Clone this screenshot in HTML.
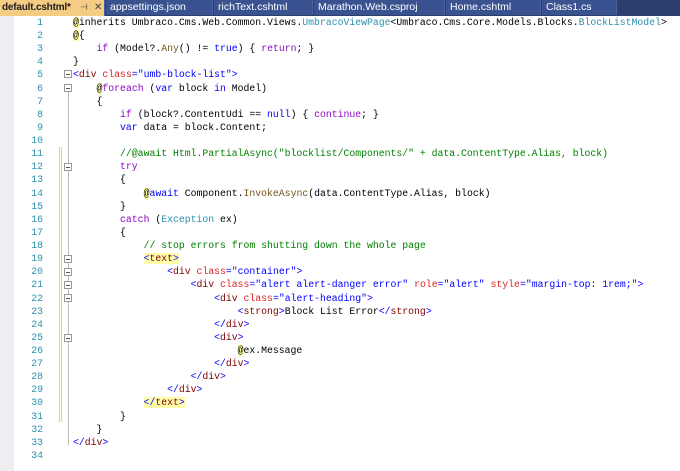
<!DOCTYPE html>
<html><head><meta charset="utf-8"><style>
*{margin:0;padding:0;box-sizing:border-box}
body{width:680px;height:471px;overflow:hidden;background:#fff;font-family:"Liberation Mono",monospace;position:relative}
#tabs{position:absolute;left:0;top:0;width:680px;height:16px;background:#2d3f6c}
.tab{position:absolute;top:0;height:15px;background:#3a5390;color:#fff;font:10.5px "Liberation Sans",sans-serif;line-height:15px;padding-left:4px;border-right:1px solid #4a63a0;white-space:nowrap;overflow:hidden}
.tab.act{background:#f5cc84;color:#1e1e1e;font-weight:bold;height:16px;padding-left:2px;font-size:10px;letter-spacing:-0.2px}
.ic{position:absolute;top:0;font-weight:normal;color:#444}
#gut{position:absolute;left:0;top:16px;width:14px;height:455px;background:#eeeef2}
.ln{position:absolute;left:14px;width:29px;text-align:right;color:#2b91af;font-size:9.8px;height:13.12px;line-height:13.12px}
.cl{position:absolute;left:73px;font-size:9.8px;white-space:pre;height:13.12px;line-height:13.12px;color:#000}
.chg{position:absolute;left:59px;width:3px;border:1px solid #e5d48a;border-top:none;border-bottom:none;background:#fffbe0}
.fold{position:absolute;left:64px;width:8px;height:8px;border:1px solid #999;background:#fff}
.fold::after{content:"";position:absolute;left:1px;top:3px;width:4px;height:1px;background:#555}
.vl{position:absolute;left:68px;width:1px;background:#bbb}
.k{color:#0000ff}.c{color:#8f08c4}.t{color:#2b91af}.m{color:#74531f}.g{color:#008000}
.tg{color:#800000}.a{color:#e21f1f}.b{color:#0000ff}.s{color:#a31515}
.r{background:#ffffaa}
</style></head><body>
<div id="tabs">
<div class="tab act" style="left:0;width:105px">default.cshtml*<span class="ic" style="left:80px;font-size:9px">⊣</span><span class="ic" style="left:94px">✕</span></div>
<div class="tab" style="left:106px;width:107px">appsettings.json</div>
<div class="tab" style="left:214px;width:99px">richText.cshtml</div>
<div class="tab" style="left:314px;width:131px">Marathon.Web.csproj</div>
<div class="tab" style="left:446px;width:95px">Home.cshtml</div>
<div class="tab" style="left:542px;width:75px">Class1.cs</div>
</div>
<div id="gut"></div>
<div class="chg" style="top:147px;height:275px"></div>
<div class="vl" style="top:85px;height:360px"></div>
<div class="fold" style="top:70px"></div>
<div class="fold" style="top:84px"></div>
<div class="fold" style="top:163px"></div>
<div class="fold" style="top:255px"></div>
<div class="fold" style="top:268px"></div>
<div class="fold" style="top:281px"></div>
<div class="fold" style="top:294px"></div>
<div class="fold" style="top:334px"></div>
<script>
var L=[
'<span class="r">@</span>inherits Umbraco.Cms.Web.Common.Views.<span class="t">UmbracoViewPage</span>&lt;Umbraco.Cms.Core.Models.Blocks.<span class="t">BlockListModel</span>&gt;',
'<span class="r">@</span>{',
'    <span class="c">if</span> (Model?.<span class="m">Any</span>() != <span class="k">true</span>) { <span class="c">return</span>; }',
'}',
'<span class="b">&lt;</span><span class="tg">div</span> <span class="a">class</span><span class="b">="umb-block-list"&gt;</span>',
'    <span class="r">@</span><span class="c">foreach</span> (<span class="k">var</span> block <span class="k">in</span> Model)',
'    {',
'        <span class="c">if</span> (block?.ContentUdi == <span class="k">null</span>) { <span class="c">continue</span>; }',
'        <span class="k">var</span> data = block.Content;',
'',
'        <span class="g">//@await Html.PartialAsync("blocklist/Components/" + data.ContentType.Alias, block)</span>',
'        <span class="c">try</span>',
'        {',
'            <span class="r">@</span><span class="k">await</span> Component.<span class="m">InvokeAsync</span>(data.ContentType.Alias, block)',
'        }',
'        <span class="c">catch</span> (<span class="t">Exception</span> ex)',
'        {',
'            <span class="g">// stop errors from shutting down the whole page</span>',
'            <span class="r"><span class="b">&lt;</span><span class="tg">text</span><span class="b">&gt;</span></span>',
'                <span class="b">&lt;</span><span class="tg">div</span> <span class="a">class</span><span class="b">="container"&gt;</span>',
'                    <span class="b">&lt;</span><span class="tg">div</span> <span class="a">class</span><span class="b">="alert alert-danger error"</span> <span class="a">role</span><span class="b">="alert"</span> <span class="a">style</span><span class="b">="margin-top: 1rem;"&gt;</span>',
'                        <span class="b">&lt;</span><span class="tg">div</span> <span class="a">class</span><span class="b">="alert-heading"&gt;</span>',
'                            <span class="b">&lt;</span><span class="tg">strong</span><span class="b">&gt;</span>Block List Error<span class="b">&lt;/</span><span class="tg">strong</span><span class="b">&gt;</span>',
'                        <span class="b">&lt;/</span><span class="tg">div</span><span class="b">&gt;</span>',
'                        <span class="b">&lt;</span><span class="tg">div</span><span class="b">&gt;</span>',
'                            <span class="r">@</span>ex.Message',
'                        <span class="b">&lt;/</span><span class="tg">div</span><span class="b">&gt;</span>',
'                    <span class="b">&lt;/</span><span class="tg">div</span><span class="b">&gt;</span>',
'                <span class="b">&lt;/</span><span class="tg">div</span><span class="b">&gt;</span>',
'            <span class="r"><span class="b">&lt;/</span><span class="tg">text</span><span class="b">&gt;</span></span>',
'        }',
'    }',
'<span class="b">&lt;/</span><span class="tg">div</span><span class="b">&gt;</span>',
''];
var h='';
for(var i=0;i<34;i++){var t=16+13.12*i;
h+='<div class="ln" style="top:'+t+'px">'+(i+1)+'</div><div class="cl" style="top:'+t+'px">'+L[i]+'</div>';}
document.write(h);
</script>
</body></html>
